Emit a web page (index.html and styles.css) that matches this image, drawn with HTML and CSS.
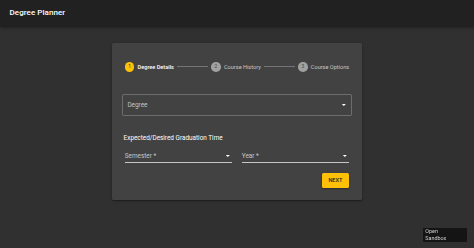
FILE: index.html
```html
<!DOCTYPE html>
<html>
<head>
<meta charset="utf-8">
<link rel="stylesheet" href="styles.css">
</head>
<body>
<header class="appbar"><h1 class="title">Degree Planner</h1></header>
<main class="main">
  <section class="card">
    <div class="stepper">
      <div class="step">
        <span class="step-icon active">1</span>
        <span class="step-label active">Degree Details</span>
      </div>
      <div class="connector"></div>
      <div class="step">
        <span class="step-icon">2</span>
        <span class="step-label">Course History</span>
      </div>
      <div class="connector"></div>
      <div class="step">
        <span class="step-icon">3</span>
        <span class="step-label">Course Options</span>
      </div>
    </div>
    <div class="outlined">
      <span class="field-label">Degree</span>
      <svg class="arrow" viewBox="0 0 24 24"><path d="M7 10l5 5 5-5z"/></svg>
    </div>
    <h2 class="section-title">Expected/Desired Graduation Time</h2>
    <div class="select-row">
      <div class="select">
        <span class="field-label">Semester *</span>
        <svg class="arrow" viewBox="0 0 24 24"><path d="M7 10l5 5 5-5z"/></svg>
      </div>
      <div class="select">
        <span class="field-label">Year *</span>
        <svg class="arrow" viewBox="0 0 24 24"><path d="M7 10l5 5 5-5z"/></svg>
      </div>
    </div>
    <div class="actions">
      <button class="next">NEXT</button>
    </div>
  </section>
</main>
<div class="sandbox">Open<br>Sandbox</div>
</body>
</html>
```
FILE: styles.css
```css
html, body {
  margin: 0;
  padding: 0;
}
body {
  background: #303030;
  font-family: Roboto, "Liberation Sans", sans-serif;
  width: 474px;
  height: 248px;
  overflow: hidden;
}
.appbar {
  height: 25.6px;
  background: #212121;
  display: flex;
  align-items: center;
  padding: 0 9.6px;
  box-shadow: 0 1px 2px rgba(0,0,0,0.3), 0 2px 4px rgba(0,0,0,0.2);
}
.title {
  margin: 0;
  font-size: 8px;
  font-weight: 500;
  color: #fff;
  letter-spacing: 0.05px;
}
.main {
  display: flex;
  justify-content: center;
  padding-top: 17.4px;
}
.card {
  width: 250px;
  box-sizing: border-box;
  background: #424242;
  border-radius: 1.6px;
  padding: 9.6px 9.6px 12.3px;
  box-shadow: 0 1px 1px rgba(0,0,0,0.25), 0 1px 3px rgba(0,0,0,0.2);
}
.stepper {
  display: flex;
  align-items: center;
  padding: 9.6px 0;
}
.step {
  display: flex;
  align-items: center;
  padding: 0 3.2px;
}
.step-icon {
  width: 9.6px;
  height: 9.6px;
  border-radius: 50%;
  background: rgba(255,255,255,0.5);
  color: #424242;
  font-size: 4.8px;
  display: flex;
  align-items: center;
  justify-content: center;
}
.step-icon.active {
  background: #ffc107;
  color: #222;
}
.step-label {
  margin-left: 3.2px;
  font-size: 5.6px;
  color: rgba(255,255,255,0.7);
}
.step-label.active {
  color: #fff;
  font-weight: 500;
}
.connector {
  flex: 1;
  border-top: 1px solid #757575;
}
.outlined {
  margin-top: 12.6px;
  height: 22.4px;
  box-sizing: border-box;
  border: 1px solid rgba(255,255,255,0.23);
  border-radius: 1.6px;
  display: flex;
  align-items: center;
  justify-content: space-between;
  padding: 0 2.4px 0 4.8px;
}
.field-label {
  font-size: 6.4px;
  color: rgba(255,255,255,0.7);
}
.arrow {
  width: 9.6px;
  height: 9.6px;
  fill: #fff;
}
.section-title {
  margin: 17.4px 0 0 2px;
  font-size: 6.4px;
  line-height: 9px;
  font-weight: 400;
  color: #fff;
}
.select-row {
  display: flex;
  gap: 9.6px;
  padding: 0 3.2px;
  margin-top: 8.2px;
}
.select {
  flex: 1;
  height: 12px;
  box-sizing: border-box;
  border-bottom: 1px solid rgba(255,255,255,0.7);
  display: flex;
  align-items: center;
  justify-content: space-between;
  padding-bottom: 0.6px;
}
.actions {
  display: flex;
  justify-content: flex-end;
  padding: 0 3.2px;
  margin-top: 10.3px;
}
.next {
  width: 27.6px;
  height: 14.4px;
  border: none;
  border-radius: 1.6px;
  background: #ffc107;
  color: #222;
  font-family: Roboto, "Liberation Sans", sans-serif;
  font-size: 5.6px;
  font-weight: 500;
  padding: 0;
  box-shadow: 0 1px 2px rgba(0,0,0,0.35);
}
.sandbox {
  position: fixed;
  right: 7.3px;
  bottom: 6.3px;
  width: 44px;
  height: 14px;
  box-sizing: border-box;
  background: #141414;
  border-radius: 1px;
  color: #d0d0d0;
  font-size: 5.4px;
  line-height: 6.5px;
  padding: 0.5px 2.6px;
}
```
